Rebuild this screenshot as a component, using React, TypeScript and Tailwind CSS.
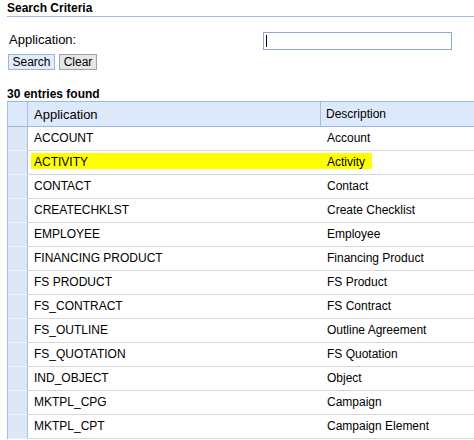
import React from "react";

const rows: [string, string][] = [
  ["ACCOUNT", "Account"],
  ["ACTIVITY", "Activity"],
  ["CONTACT", "Contact"],
  ["CREATECHKLST", "Create Checklist"],
  ["EMPLOYEE", "Employee"],
  ["FINANCING PRODUCT", "Financing Product"],
  ["FS PRODUCT", "FS Product"],
  ["FS_CONTRACT", "FS Contract"],
  ["FS_OUTLINE", "Outline Agreement"],
  ["FS_QUOTATION", "FS Quotation"],
  ["IND_OBJECT", "Object"],
  ["MKTPL_CPG", "Campaign"],
  ["MKTPL_CPT", "Campaign Element"],
];

export default function App() {
  return (
    <div className="w-[474px] h-[440px] overflow-hidden bg-white text-black font-['Liberation_Sans',Arial,sans-serif]">
      <div className="ml-[7px] pt-[1px] border-b border-[#a3b8e2]">
        <div className="text-[12px] leading-[15px] font-bold">Search Criteria</div>
      </div>

      <div className="mt-[15px] flex items-start h-[18px]">
        <div className="ml-[9px] text-[13px] leading-[16px] w-[254px]">Application:</div>
        <div className="w-[189px] h-[18px] border border-[#8ea7d8] bg-white flex items-center pl-[2px]">
          <span className="block w-[1px] h-[12px] bg-black" />
        </div>
      </div>

      <div className="mt-[4px] ml-[8px] flex gap-[4px]">
        <button className="h-[16px] w-[47px] border border-[#9db3df] bg-[#e4ecfa] text-[12px] leading-[14px] flex items-center justify-center">
          Search
        </button>
        <button className="h-[16px] w-[38px] border border-[#a3a3a3] bg-[#e6e6e6] text-[12px] leading-[14px] flex items-center justify-center">
          Clear
        </button>
      </div>

      <div className="mt-[17px] ml-[7px] text-[12px] leading-[14px] font-bold">30 entries found</div>

      <div className="ml-[7px] border-l border-[#a6bde5]">
        <div className="flex h-[26px] border-t border-b border-[#9db5e2] bg-[#dce9fa]">
          <div className="w-[20px] border-r border-[#a6bde5]" />
          <div className="w-[293px] border-r border-[#a6bde5] pl-[6px] flex items-center text-[13px] leading-[15px]">
            Application
          </div>
          <div className="flex-1 pl-[5px] flex items-center text-[12px] leading-[14px]">Description</div>
        </div>
        {rows.map(([app, desc], i) => (
          <div key={app} className="relative flex h-[24px]">
            {i === 1 && (
              <div className="absolute left-[23px] top-[2px] w-[341px] h-[16px] bg-[#ffff00]" />
            )}
            <div className="w-[20px] border-r border-[#a6bde5] border-b border-b-[#eef3fb] bg-[#dde8f7]" />
            <div className="relative w-[293px] border-b border-[#d6d6d6] pl-[6px] pb-[1px] flex items-center text-[12px] leading-[14px]">
              {app}
            </div>
            <div className="relative flex-1 border-b border-[#d6d6d6] pl-[6px] pb-[1px] flex items-center text-[12px] leading-[14px]">
              {desc}
            </div>
          </div>
        ))}
      </div>
    </div>
  );
}
